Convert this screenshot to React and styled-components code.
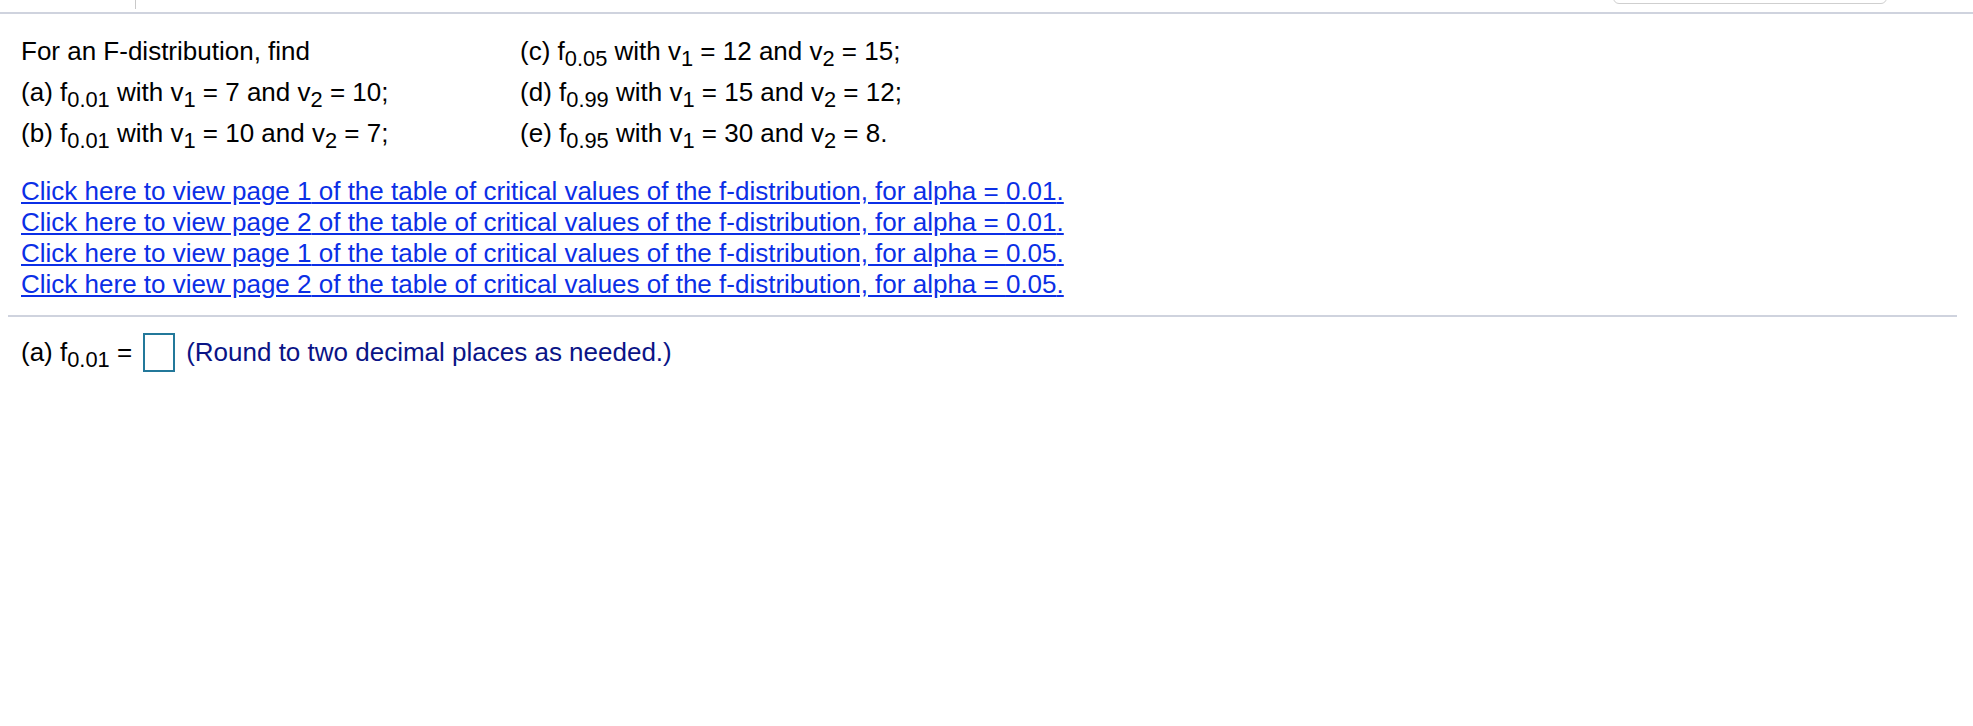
import React from 'react';
import styled, { createGlobalStyle } from 'styled-components';

const GlobalStyle = createGlobalStyle`
  body {
    margin: 0;
    background: #ffffff;
    font-family: "Liberation Sans", Arial, Helvetica, sans-serif;
    color: #000000;
  }
`;

const TopBar = styled.div`
  display: flex;
  height: 12px;
  border-bottom: 2px solid #cfd3de;
`;

const TabDivider = styled.div`
  width: 135px;
  height: 9px;
  border-right: 1px solid #c9c9c9;
`;

const Spacer = styled.div`
  flex: 1;
`;

// bottom edge of a control sitting above the visible area
const ClippedBox = styled.div`
  width: 272px;
  height: 18px;
  margin-top: -16px;
  margin-right: 86px;
  border: 1px solid #cfcfcf;
  border-radius: 6px;
`;

const Main = styled.div`
  padding: 17px 16px 0 8px;
  font-size: 26px;
`;

const Intro = styled.div`
  display: grid;
  grid-template-columns: 499px auto;
  padding-left: 13px;
`;

const Line = styled.div`
  line-height: 41px;
  height: 41px;
  white-space: nowrap;
`;

const Sub = styled.sub`
  font-size: 0.84em;
  vertical-align: -0.27em;
  line-height: 0;
`;

const LinkList = styled.div`
  display: flex;
  flex-direction: column;
  margin-top: 22px;
  padding-left: 13px;
`;

const TableLink = styled.a`
  display: block;
  line-height: 31px;
  color: #0b2fe6;
  text-decoration: underline;
  white-space: nowrap;
  cursor: pointer;
`;

const Divider = styled.div`
  margin-top: 15px;
  border-top: 2px solid #cfd3de;
`;

const AnswerRow = styled.div`
  display: flex;
  align-items: center;
  margin-top: 16px;
  padding-left: 13px;
  white-space: nowrap;
`;

const AnswerLabel = styled.span`
  line-height: 39px;
`;

const AnswerBox = styled.span`
  display: inline-block;
  box-sizing: border-box;
  width: 32px;
  height: 39px;
  margin: 0 11px 0 11px;
  border: 2px solid #23789a;
  background: #ffffff;
`;

const Hint = styled.span`
  color: #0a1486;
`;

const F = ({ sub }) => (
  <>
    f<Sub>{sub}</Sub>
  </>
);

const V = ({ n }) => (
  <>
    v<Sub>{n}</Sub>
  </>
);

const parts = [
  ['c', '0.05', '12', '15', ';'],
  ['a', '0.01', '7', '10', ';'],
  ['d', '0.99', '15', '12', ';'],
  ['b', '0.01', '10', '7', ';'],
  ['e', '0.95', '30', '8', '.'],
];

const Part = ({ p }) => (
  <Line>
    ({p[0]}) <F sub={p[1]} /> with <V n="1" /> = {p[2]} and <V n="2" /> = {p[3]}
    {p[4]}
  </Line>
);

const links = [
  ['1', '0.01'],
  ['2', '0.01'],
  ['1', '0.05'],
  ['2', '0.05'],
];

export default function App() {
  return (
    <>
      <GlobalStyle />
      <TopBar>
        <TabDivider />
        <Spacer />
        <ClippedBox />
      </TopBar>
      <Main>
        <Intro>
          <Line>For an F-distribution, find</Line>
          {parts.map((p) => (
            <Part key={p[0]} p={p} />
          ))}
        </Intro>
        <LinkList>
          {links.map(([page, alpha]) => (
            <TableLink key={page + alpha}>
              Click here to view page {page} of the table of critical values of the
              f-distribution, for alpha = {alpha}.
            </TableLink>
          ))}
        </LinkList>
        <Divider />
        <AnswerRow>
          <AnswerLabel>
            (a) <F sub="0.01" /> =
          </AnswerLabel>
          <AnswerBox />
          <Hint>(Round to two decimal places as needed.)</Hint>
        </AnswerRow>
      </Main>
    </>
  );
}
